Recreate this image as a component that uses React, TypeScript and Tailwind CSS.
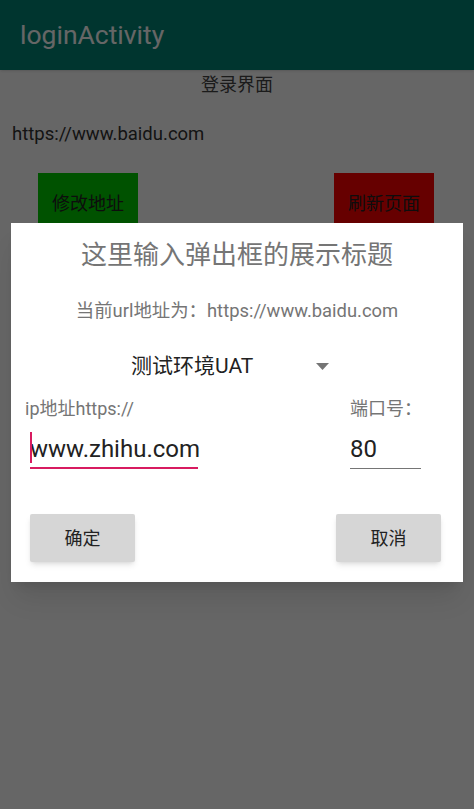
import React from "react";

const font = { fontFamily: 'Roboto, "Noto Sans CJK SC", sans-serif' };

export default function App() {
	return (
		<div className="relative w-[474px] h-[809px] overflow-hidden bg-white" style={font}>
			{/* ACTIVITY */}
			<div className="h-[70px] bg-[#008577] flex items-center px-[20px] shadow">
				<span className="text-[26.5px] text-white">loginActivity</span>
			</div>
			<div className="text-center text-[18px] text-[#444] mt-[2px] leading-[26px]">登录界面</div>
			<div className="px-[12px] mt-[23px] text-[18.5px] text-[#333] leading-[26px]">https://www.baidu.com</div>
			<div className="flex justify-between px-[38px] mt-[26px] pr-[40px]">
				<div className="w-[100px] h-[60px] bg-[#00cc00] flex items-center justify-center text-[18px] text-[#222]">修改地址</div>
				<div className="w-[100px] h-[60px] bg-[#ff0000] flex items-center justify-center text-[18px] text-[#222]">刷新页面</div>
			</div>

			{/* DIM */}
			<div className="absolute inset-0 bg-black/60" />

			{/* DIALOG */}
			<div className="absolute left-[11px] top-[223px] w-[452px] h-[359px] bg-white shadow-xl">
				<div className="text-center text-[26px] text-[#757575] mt-[13px] leading-[38px]">这里输入弹出框的展示标题</div>
				<div className="text-center text-[18.4px] text-[#757575] mt-[24px] leading-[26px]">当前url地址为：https://www.baidu.com</div>
				<div className="flex items-center mt-[28px] pl-[120px]">
					<span className="text-[21px] text-[#222] leading-[28px]">测试环境UAT</span>
					<svg className="ml-[63px]" width="13" height="7" viewBox="0 0 13 7">
						<path d="M0 0 L13 0 L6.5 7 Z" fill="#757575" />
					</svg>
				</div>
				<div className="flex justify-between mt-[17px] pl-[14px] pr-[42px]">
					<div>
						<div className="text-[18px] text-[#757575] leading-[24px] whitespace-nowrap">ip地址https://</div>
						<div className="relative ml-[5px] mt-[11px] w-[168px] border-b-2 border-[#d81b60] pb-[1px]">
							<span className="absolute left-[0px] top-[0px] w-[2px] h-[31px] bg-[#d81b60]" />
							<span className="text-[24px] text-[#222] leading-[34px]">www.zhihu.com</span>
						</div>
					</div>
					<div className="w-[71px]">
						<div className="text-[18px] text-[#757575] leading-[24px] whitespace-nowrap">端口号：</div>
						<div className="mt-[11px] border-b border-[#757575] pb-[2px]">
							<span className="text-[24px] text-[#222] leading-[34px]">80</span>
						</div>
					</div>
				</div>
				<div className="flex justify-between pl-[19px] pr-[22px] mt-[45px]">
					<button className="w-[105px] h-[48px] bg-[#d6d6d6] rounded-[2px] shadow-md text-[18px] text-[#222]">确定</button>
					<button className="w-[105px] h-[48px] bg-[#d6d6d6] rounded-[2px] shadow-md text-[18px] text-[#222]">取消</button>
				</div>
			</div>
		</div>
	);
}
